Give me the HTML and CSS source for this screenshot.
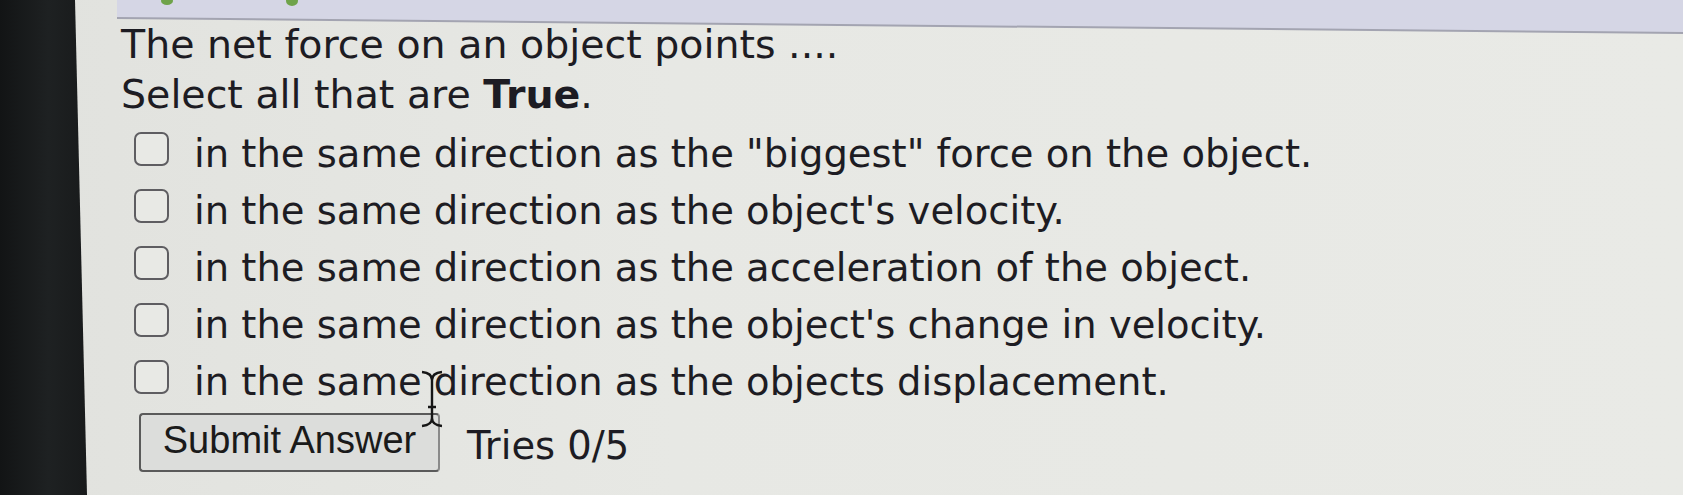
FILE: index.html
```html
<!DOCTYPE html>
<html>
<head>
<meta charset="utf-8">
<link rel="stylesheet" href="styles.css">
</head>
<body>
<div class="frame">
  <div class="bezel"></div>
  <div class="screen">
    <svg class="topbar" width="1566" height="34" viewBox="0 0 1566 34">
      <polygon points="0,0 1566,0 1566,34 0,19" fill="#a3a4b1"/>
      <polygon points="0,0 1566,0 1566,32 0,17" fill="#d5d6e5"/>
      <ellipse cx="50" cy="1" rx="6" ry="4" fill="#6fa34a"/>
      <ellipse cx="175" cy="1" rx="6" ry="5" fill="#6fa34a"/>
    </svg>
    <div class="content">
      <div class="question">The net force on an object points ....</div>
      <div class="question">Select all that are <b>True</b>.</div>
      <ul class="options">
        <li><span class="box"></span><span>in the same direction as the "biggest" force on the object.</span></li>
        <li><span class="box"></span><span>in the same direction as the object's velocity.</span></li>
        <li><span class="box"></span><span>in the same direction as the acceleration of the object.</span></li>
        <li><span class="box"></span><span>in the same direction as the object's change in velocity.</span></li>
        <li class="last"><span class="box"></span><span>in the same direction as the objects displacement.</span>
          <svg class="ibeam" width="22" height="58" viewBox="0 0 22 58"><path d="M1 2 Q11 3 11 10 Q11 3 21 2 M11 10 V49 M7 37 H15 M1 56 Q11 55 11 48 Q11 55 21 56" fill="none" stroke="#161616" stroke-width="2.4"/></svg>
        </li>
      </ul>
      <div class="actions">
        <button class="submit">Submit Answer</button>
        <span class="tries">Tries 0/5</span>
      </div>
    </div>
  </div>
</div>
</body>
</html>
```
FILE: styles.css
```css
html, body {
  margin: 0;
  padding: 0;
  width: 1683px;
  height: 495px;
  overflow: hidden;
  background: #e5e6e2;
}
.frame {
  display: flex;
  height: 495px;
  background: linear-gradient(90deg, #e1e2de 0%, #e7e8e4 40%, #e9eae6 100%);
}
.bezel {
  width: 88px;
  flex: none;
  background: linear-gradient(90deg, #121415 0%, #1e2122 55%, #181a1b 100%);
  clip-path: polygon(0 0, 75px 0, 87px 100%, 0 100%);
}
.screen {
  flex: 1;
  display: flex;
  flex-direction: column;
}
.topbar {
  display: block;
  flex: none;
  margin-left: 29px;
  margin-bottom: -15px;
}
.content {
  padding-left: 33px;
  font-family: "DejaVu Sans", Verdana, sans-serif;
  color: #1d1c23;
}
.question {
  font-size: 39.5px;
  line-height: 50px;
}
.question b {
  font-weight: bold;
}
.options {
  list-style: none;
  margin: 6px 0 0 0;
  padding: 0 0 0 13px;
}
.options li {
  display: flex;
  align-items: center;
  height: 57px;
  font-size: 38.5px;
}
.options li.last {
  position: relative;
}
.box {
  width: 31px;
  height: 30px;
  border: 2.5px solid #5e5d61;
  border-radius: 7px;
  margin-right: 25px;
  margin-bottom: 10px;
  flex: none;
  background: #e8e9e5;
}
.ibeam {
  position: absolute;
  left: 287px;
  top: 17px;
}
.actions {
  display: flex;
  align-items: center;
  margin-top: 3px;
  padding-left: 18px;
}
.submit {
  font-family: "Liberation Sans", Arial, sans-serif;
  font-size: 38px;
  color: #1a1a1a;
  background: #dcdddb;
  border: 2px solid #5a5a5a;
  border-right-color: #8a8a8a;
  border-radius: 4px;
  height: 59px;
  width: 301px;
  padding: 0 0 4px 0;
}
.tries {
  margin-left: 27px;
  font-size: 38.5px;
  margin-top: 6px;
}
```
